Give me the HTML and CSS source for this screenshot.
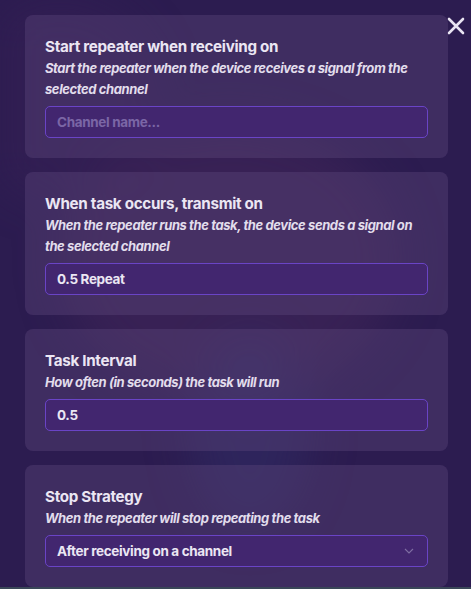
FILE: index.html
```html
<!DOCTYPE html>
<html>
<head>
	<title>repeater</title>
	<link rel="stylesheet" href="styles.css">
</head>
<body>

	<div class="backdrop">
		<div class="blob b1"></div>
		<div class="blob b2"></div>
		<div class="blob b3"></div>
	</div>

	<button class="close" aria-label="close">
		<svg width="18" height="18" viewBox="0 0 18 18"><path d="M2 2 L16 16 M16 2 L2 16" stroke="#e9e4f2" stroke-width="2.6" stroke-linecap="round"/></svg>
	</button>

	<div class="panel">

		<div class="card">
			<div class="title">Start repeater when receiving on</div>
			<div class="desc">Start the repeater when the device receives a signal from the selected channel</div>
			<input class="field" type="text" placeholder="Channel name...">
		</div>

		<div class="card">
			<div class="title">When task occurs, transmit on</div>
			<div class="desc">When the repeater runs the task, the device sends a signal on the selected channel</div>
			<input class="field" type="text" value="0.5 Repeat">
		</div>

		<div class="card">
			<div class="title">Task Interval</div>
			<div class="desc">How often (in seconds) the task will run</div>
			<input class="field" type="text" value="0.5">
		</div>

		<div class="card">
			<div class="title">Stop Strategy</div>
			<div class="desc">When the repeater will stop repeating the task</div>
			<div class="field select">
				<span>After receiving on a channel</span>
				<svg width="10" height="6" viewBox="0 0 10 6"><path d="M1 1 L5 5 L9 1" fill="none" stroke="#7f6ea3" stroke-width="1.1"/></svg>
			</div>
		</div>

	</div>

	<div class="edge"></div>

</body>
</html>
```
FILE: styles.css
```css
body{
	margin: 0;
	height: 589px;
	overflow: hidden;
	background: #2c1c50;
	font-family: Inter, "Noto Sans", sans-serif;
	color: #ebe6f3;
	position: relative;
}

.backdrop{
	position: absolute;
	inset: 0;
	overflow: hidden;
	filter: blur(22px);
}

.blob{
	position: absolute;
	border-radius: 50%;
}

.b1{
	left: 60px;
	top: 120px;
	width: 340px;
	height: 280px;
	background: rgba(70, 40, 90, 0.45);
}

.b2{
	left: 190px;
	top: 330px;
	width: 120px;
	height: 200px;
	background: rgba(50, 50, 110, 0.4);
}

.b3{
	left: -40px;
	top: 0;
	width: 200px;
	height: 200px;
	background: rgba(60, 35, 90, 0.35);
}

.close{
	position: absolute;
	top: 16px;
	right: 5px;
	background: none;
	border: none;
	padding: 0;
	width: 20px;
	height: 20px;
	display: flex;
	align-items: center;
	justify-content: center;
}

.panel{
	position: relative;
	width: 423px;
	margin-left: 25px;
	padding-top: 15px;
	display: flex;
	flex-direction: column;
	gap: 14px;
}

.card{
	background: rgba(90, 70, 122, 0.42);
	border-radius: 8px;
	padding: 20px;
}

.title{
	font-size: 15.2px;
	font-weight: 700;
	line-height: 23px;
	letter-spacing: -0.3px;
}

.desc{
	font-size: 13px;
	font-weight: 700;
	font-style: italic;
	line-height: 21px;
	letter-spacing: -0.4px;
	color: #e2ddec;
	margin-bottom: 6px;
}

.field{
	box-sizing: border-box;
	display: block;
	width: 100%;
	height: 32px;
	background: #42266f;
	border: 1px solid #6a44c6;
	border-radius: 5px;
	padding: 0 11px;
	font-family: Inter, "Noto Sans", sans-serif;
	font-size: 13.5px;
	font-weight: 700;
	letter-spacing: -0.35px;
	color: #ebe6f3;
	outline: none;
}

.field::placeholder{
	color: #7b66a6;
}

.select{
	display: flex;
	align-items: center;
	justify-content: space-between;
	padding-right: 13px;
}

.edge{
	position: absolute;
	left: 0;
	right: 0;
	bottom: 0;
	height: 2px;
	background: #3a4758;
}
```
